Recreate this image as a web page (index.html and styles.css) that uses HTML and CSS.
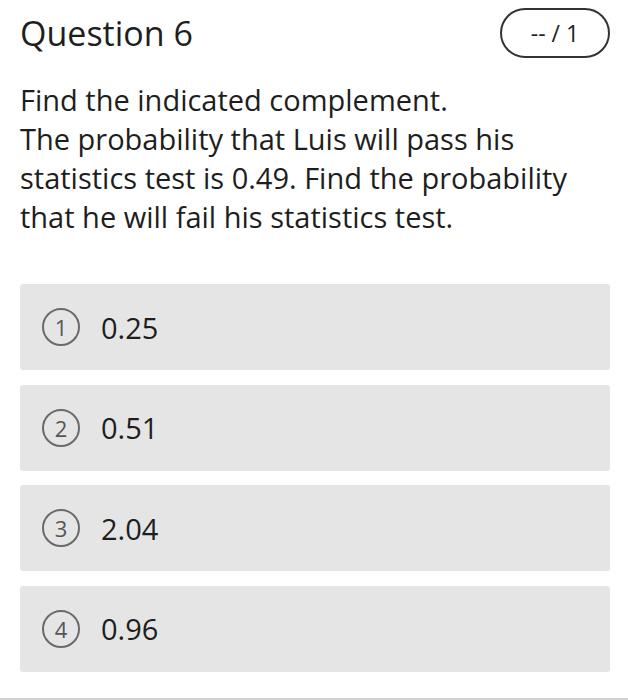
FILE: index.html
```html
<!DOCTYPE html>
<html lang="en">
<head>
  <meta charset="UTF-8">
  <meta name="viewport" content="width=device-width, initial-scale=1.0">
  <title>Question 6</title>
  <link rel="stylesheet" href="styles.css">
</head>
<body>
  <div id="question">
    <div class="header">
      <h1 class="title">Question 6</h1>
      <div class="score">-- / 1</div>
    </div>
    <div class="prompt">
      <p>Find the indicated complement.</p>
      <p>The probability that Luis will pass his statistics test is 0.49. Find the probability that he will fail his statistics test.</p>
    </div>
    <div class="choices">
      <div class="choice"><span class="num">1</span><span class="value">0.25</span></div>
      <div class="choice"><span class="num">2</span><span class="value">0.51</span></div>
      <div class="choice"><span class="num">3</span><span class="value">2.04</span></div>
      <div class="choice"><span class="num">4</span><span class="value">0.96</span></div>
    </div>
  </div>
</body>
</html>
```

FILE: styles.css
```css
body {
  margin: 0;
  font-family: "Open Sans", "Noto Sans", sans-serif;
  color: #1e1e1e;
  background: #fff;
}

#question {
  height: 698px;
  padding: 0 18px 0 20px;
  border-bottom: 2px solid #d0d0d0;
  box-sizing: content-box;
}

.header {
  display: flex;
  justify-content: space-between;
  align-items: center;
  padding-top: 8px;
}

.title {
  margin: 0;
  font-size: 34px;
  font-weight: 500;
  line-height: 50px;
}

.score {
  width: 106px;
  height: 46px;
  border: 2px solid #333;
  border-radius: 25px;
  display: flex;
  justify-content: center;
  align-items: center;
  font-size: 23px;
  font-weight: 500;
}

.prompt {
  margin-top: 22px;
  font-size: 29px;
  font-weight: 500;
  line-height: 39px;
}

.prompt p {
  margin: 0;
}

.choices {
  margin-top: 48px;
  display: flex;
  flex-direction: column;
  gap: 14.5px;
}

.choice {
  height: 86px;
  background-color: #e5e5e5;
  border-radius: 3px;
  display: flex;
  align-items: center;
  padding-left: 22px;
}

.num {
  width: 34px;
  height: 34px;
  border: 2px solid #6a6a6a;
  border-radius: 50%;
  display: flex;
  justify-content: center;
  align-items: center;
  font-size: 22px;
  color: #555;
}

.value {
  margin-left: 21px;
  font-size: 29px;
  font-weight: 500;
}
```
